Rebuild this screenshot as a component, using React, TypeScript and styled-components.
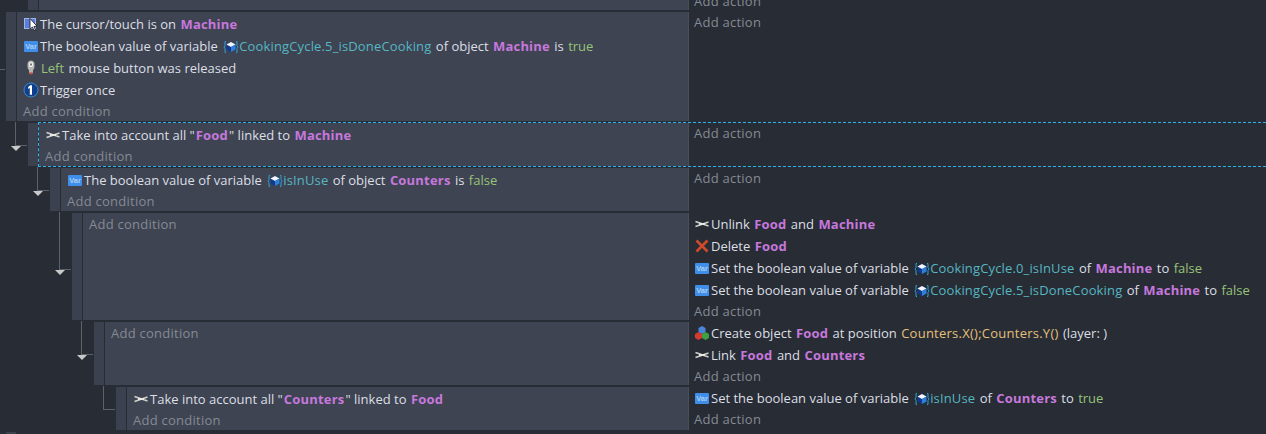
import * as React from 'react'
import styled, { createGlobalStyle } from 'styled-components'

const colors = {
  page: '#282c34',
  panel: '#3e4452',
  bar: '#3b414e',
  line: '#5c616c',
  text: '#dcdfe5',
  muted: '#858a94',
  object: '#c678dd',
  value: '#98c379',
  variable: '#56b6c2',
  expression: '#e5c07b',
  select: '#2bb3ee',
}

const GlobalStyle = createGlobalStyle`
  html, body {
    margin: 0;
    padding: 0;
    height: 100%;
    background: ${colors.page};
  }
  body {
    font-family: "Open Sans", sans-serif;
    font-size: 13px;
    color: ${colors.text};
  }
`

const Viewport = styled.div`
  height: 434px;
  overflow: hidden;
`

const EventList = styled.div`
  display: flex;
  flex-direction: column;
  margin-top: -31px;
`

const EventRow = styled.div`
  position: relative;
  display: flex;
  margin-bottom: 2px;
`

const ConditionColumn = styled.div<{ $depth: number }>`
  flex: none;
  display: flex;
  width: 689px;
  box-sizing: border-box;
  padding-left: ${p => 6 + p.$depth * 22}px;
  border-right: 1px solid #4a4e57;
`

const DragBar = styled.div`
  position: relative;
  flex: none;
  width: 10px;
  background: ${colors.bar};
  margin-right: 1px;
`

const TrailingBar = styled.div`
  width: 10px;
  height: 2px;
  margin-left: 6px;
  background: ${colors.bar};
`

const Branch = styled.div`
  position: absolute;
  right: 100%;
  top: -1px;
  bottom: 47%;
  width: 11px;
  margin-right: 1px;
  border-left: 1px solid ${colors.line};
  border-bottom: 1px solid ${colors.line};
`

const FoldArrow = styled.div`
  position: absolute;
  left: -5px;
  bottom: -6px;
  width: 0;
  height: 0;
  border-left: 5px solid transparent;
  border-right: 5px solid transparent;
  border-top: 5px solid #c9c9c9;
`

const ConditionPanel = styled.div`
  flex: 1;
  padding-top: 1px;
  background: ${colors.panel};
`

const ActionColumn = styled.div`
  flex: 1;
  padding-left: 5px;
`

const Instruction = styled.div`
  display: flex;
  align-items: center;
  height: 22px;
  padding-left: 6px;
  white-space: nowrap;
`

const ActionInstruction = styled(Instruction)`
  padding-left: 0;
`

const Text = styled.span`
  margin-left: 1px;
  white-space: pre;
`

const Obj = styled.b`
  margin: 0 1px;
  color: ${colors.object};
  font-weight: 700;
  letter-spacing: .2px;
`

const Val = styled.span`
  margin: 0 1px;
  color: ${colors.value};
`

const Expr = styled.span`
  margin: 0 1px;
  color: ${colors.expression};
  letter-spacing: .25px;
`

const VarName = styled.span`
  margin-right: 1px;
  color: ${colors.variable};
  letter-spacing: .15px;
`

const AddCondition = styled.div`
  display: flex;
  align-items: center;
  height: 20px;
  padding-left: 6px;
  color: ${colors.muted};
  letter-spacing: .25px;
`

const AddAction = styled.div<{ $tight?: boolean }>`
  display: flex;
  align-items: center;
  height: ${p => (p.$tight ? 19 : 20)}px;
  color: ${colors.muted};
  letter-spacing: .25px;
`

const Selection = styled.div<{ $depth: number }>`
  position: absolute;
  left: ${p => 16 + p.$depth * 22}px;
  right: 0;
  top: -1px;
  bottom: -1px;
  border: 1px dashed ${colors.select};
  border-right: none;
  pointer-events: none;
`

const InlineIcon = styled.svg`
  display: inline-block;
  margin-left: 2px;
  vertical-align: -3px;
`

const RowIcon = styled.svg`
  flex: none;
`

const VarIcon = () => (
  <RowIcon width="16" height="16" viewBox="0 0 16 16">
    <rect x="1" y="3" width="14" height="11" rx="1" fill="#3f8fea" />
    <text x="8" y="11" fontSize="7.500" fontWeight="700" textAnchor="middle" fill="#a9cdf5" fontFamily="Liberation Sans">
      Var
    </text>
  </RowIcon>
)

const CursorIcon = () => (
  <RowIcon width="16" height="16" viewBox="0 0 16 16">
    <rect x="1.500" y="2.500" width="11" height="10" fill="#5d7ed6" stroke="#9db2e8" />
    <path d="M7 2.500v10.500l2.500-2 1.500 3.500 1.500-.7-1.500-3.300 3-.3z" fill="#fff" stroke="#111" strokeWidth=".8" />
  </RowIcon>
)

const MouseIcon = () => (
  <RowIcon width="16" height="16" viewBox="0 0 16 16">
    <path d="M4.500 4c0-2.200 1.500-3.500 3.500-3.500s3.500 1.300 3.500 3.500v3c0 1.500-1 2.500-1.500 3v3.500h-4v-3.500c-.5-.5-1.500-1.500-1.500-3z" fill="#b4b4b0" />
    <rect x="6" y="2" width="4" height="5" rx="1.500" fill="#f0f0ee" />
    <rect x="7" y="3.500" width="2" height="2" fill="#77777a" />
    <path d="M6 12.500h4l-1 2h-2z" fill="#c0473c" />
  </RowIcon>
)

const OnceIcon = () => (
  <RowIcon width="16" height="16" viewBox="0 0 16 16">
    <circle cx="8" cy="8" r="7" fill="#123f8c" stroke="#3a8cc4" />
    <path d="M9 3.200v9.600h-2.200v-6.800l-1.600.9v-2l2-1.700z" fill="#fff" />
  </RowIcon>
)

const LinkIcon = () => (
  <RowIcon width="16" height="16" viewBox="0 0 16 16">
    <path d="M1.500 5.500l13 4.500M1.500 10.500l13-4.500" stroke="#cfcfc9" strokeWidth="1.800" fill="none" />
    <path d="M5 8h6" stroke="#e8e8e4" strokeWidth="2" />
  </RowIcon>
)

const DeleteIcon = () => (
  <RowIcon width="16" height="16" viewBox="0 0 16 16">
    <path d="M2.500 2.500l11 11M13.500 2.500l-11 11" stroke="#cf4a2a" strokeWidth="2.600" />
  </RowIcon>
)

const CreateIcon = () => (
  <RowIcon width="16" height="16" viewBox="0 0 16 16">
    <path d="M8 1l3.500 2v4l-3.500 2-3.500-2v-4z" fill="#4a86d8" />
    <path d="M4.500 7l3.500 2v4l-3.500 2-3.500-2v-4z" fill="#d23b30" />
    <path d="M11.500 7l3.500 2v4l-3.500 2-3.500-2v-4z" fill="#3fa043" />
  </RowIcon>
)

const CubeVar = () => (
  <InlineIcon width="16" height="14" viewBox="0 0 16 14">
    <path d="M3 1.500h-1v4l-1 1.500 1 1.500v4h1M13 1.500h1v4l1 1.500-1 1.500v4h-1" fill="none" stroke="#2f9fd0" />
    <path d="M8 2l4.500 2.500v5l-4.500 2.500-4.500-2.500v-5z" fill="#123a8c" />
    <path d="M8 2l4.500 2.500-4.500 2.500-4.500-2.500z" fill="#f2f6ff" />
    <path d="M8 7l4.500-2.500v5l-4.500 2.500z" fill="#2f7fd8" />
  </InlineIcon>
)

const Variable: React.FC<{ name: string }> = ({ name }) => (
  <>
    <CubeVar />
    <VarName>{name}</VarName>
  </>
)

interface EventProps {
  depth: number
  conditions?: React.ReactNode
  actions?: React.ReactNode
  tight?: boolean
  selected?: boolean
  foldable?: boolean
  scrolledOff?: boolean
}

const Event: React.FC<EventProps> = ({ depth, conditions, actions, tight, selected, foldable = true, scrolledOff }) => (
  <EventRow>
    <ConditionColumn $depth={depth}>
      <DragBar>
        <Branch>{foldable && <FoldArrow />}</Branch>
      </DragBar>
      <ConditionPanel>
        {conditions}
        {!scrolledOff && <AddCondition>Add condition</AddCondition>}
      </ConditionPanel>
    </ConditionColumn>
    <ActionColumn>
      {actions}
      <AddAction $tight={tight}>Add action</AddAction>
    </ActionColumn>
    {selected && <Selection $depth={depth} />}
  </EventRow>
)

const Condition: React.FC<{ icon: React.ReactNode; children: React.ReactNode }> = ({ icon, children }) => (
  <Instruction>
    {icon}
    <Text>{children}</Text>
  </Instruction>
)

const Action: React.FC<{ icon: React.ReactNode; children: React.ReactNode }> = ({ icon, children }) => (
  <ActionInstruction>
    {icon}
    <Text>{children}</Text>
  </ActionInstruction>
)

const App: React.FC = () => (
  <Viewport>
    <GlobalStyle />
    <EventList>
      <Event depth={1} tight scrolledOff actions={<Action icon={null}>{' '}</Action>} foldable={false} />
      <Event
        depth={0}
        conditions={
          <>
            <Condition icon={<CursorIcon />}>
              The cursor/touch is on <Obj>Machine</Obj>
            </Condition>
            <Condition icon={<VarIcon />}>
              The boolean value of variable <Variable name="CookingCycle.5_isDoneCooking" /> of object <Obj>Machine</Obj> is <Val>true</Val>
            </Condition>
            <Condition icon={<MouseIcon />}>
              <Val>Left</Val> mouse button was released
            </Condition>
            <Condition icon={<OnceIcon />}>Trigger once</Condition>
          </>
        }
      />
      <Event
        depth={1}
        selected
        conditions={
          <Condition icon={<LinkIcon />}>
            Take into account all "<Obj>Food</Obj>" linked to <Obj>Machine</Obj>
          </Condition>
        }
      />
      <Event
        depth={2}
        conditions={
          <Condition icon={<VarIcon />}>
            The boolean value of variable <Variable name="isInUse" /> of object <Obj>Counters</Obj> is <Val>false</Val>
          </Condition>
        }
      />
      <Event
        depth={3}
        tight
        actions={
          <>
            <Action icon={<LinkIcon />}>
              Unlink <Obj>Food</Obj> and <Obj>Machine</Obj>
            </Action>
            <Action icon={<DeleteIcon />}>
              Delete <Obj>Food</Obj>
            </Action>
            <Action icon={<VarIcon />}>
              Set the boolean value of variable <Variable name="CookingCycle.0_isInUse" /> of <Obj>Machine</Obj> to <Val>false</Val>
            </Action>
            <Action icon={<VarIcon />}>
              Set the boolean value of variable <Variable name="CookingCycle.5_isDoneCooking" /> of <Obj>Machine</Obj> to <Val>false</Val>
            </Action>
          </>
        }
      />
      <Event
        depth={4}
        tight
        actions={
          <>
            <Action icon={<CreateIcon />}>
              Create object <Obj>Food</Obj> at position <Expr>Counters.X();Counters.Y()</Expr> (layer: )
            </Action>
            <Action icon={<LinkIcon />}>
              Link <Obj>Food</Obj> and <Obj>Counters</Obj>
            </Action>
          </>
        }
      />
      <Event
        depth={5}
        foldable={false}
        conditions={
          <Condition icon={<LinkIcon />}>
            Take into account all "<Obj>Counters</Obj>" linked to <Obj>Food</Obj>
          </Condition>
        }
        actions={
          <Action icon={<VarIcon />}>
            Set the boolean value of variable <Variable name="isInUse" /> of <Obj>Counters</Obj> to <Val>true</Val>
          </Action>
        }
      />
      <TrailingBar />
    </EventList>
  </Viewport>
)

export default App
